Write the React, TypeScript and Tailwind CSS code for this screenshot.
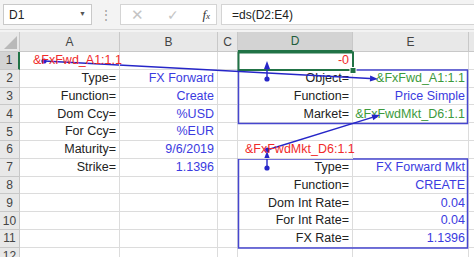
import React from 'react';

type Cell = { text: string; color?: string; align?: 'left' | 'right' };

const RED = 'text-[#f02a2a]';
const BLUE = 'text-[#3b3be0]';
const GREEN = 'text-[#3c9a3c]';
const BLACK = 'text-[#222]';

// columns: A, B, C, D, E, F
const rows: (Cell | null)[][] = [
  [{ text: '&FxFwd_A1:1.1', color: RED, align: 'left' }, null, null, { text: '-0', color: RED }, null, null],
  [{ text: 'Type=' }, { text: 'FX Forward', color: BLUE }, null, { text: 'Object=' }, { text: '&FxFwd_A1:1.1', color: GREEN }, null],
  [{ text: 'Function=' }, { text: 'Create', color: BLUE }, null, { text: 'Function=' }, { text: 'Price Simple', color: BLUE }, null],
  [{ text: 'Dom Ccy=' }, { text: '%USD', color: BLUE }, null, { text: 'Market=' }, { text: '&FxFwdMkt_D6:1.1', color: GREEN }, null],
  [{ text: 'For Ccy=' }, { text: '%EUR', color: BLUE }, null, null, null, null],
  [{ text: 'Maturity=' }, { text: '9/6/2019', color: BLUE }, null, { text: '&FxFwdMkt_D6:1.1', color: RED, align: 'left' }, null, null],
  [{ text: 'Strike=' }, { text: '1.1396', color: BLUE }, null, { text: 'Type=' }, { text: 'FX Forward Mkt', color: BLUE }, null],
  [null, null, null, { text: 'Function=' }, { text: 'CREATE', color: BLUE }, null],
  [null, null, null, { text: 'Dom Int Rate=' }, { text: '0.04', color: BLUE }, null],
  [null, null, null, { text: 'For Int Rate=' }, { text: '0.04', color: BLUE }, null],
  [null, null, null, { text: 'FX Rate=' }, { text: '1.1396', color: BLUE }, null],
  [null, null, null, null, null, null],
];

const cols = ['A', 'B', 'C', 'D', 'E', ''];

function Arrow({ x1, y1, x2, y2 }: { x1: number; y1: number; x2: number; y2: number }) {
  const dx = x2 - x1;
  const dy = y2 - y1;
  const len = Math.hypot(dx, dy);
  const ux = dx / len;
  const uy = dy / len;
  const bx = x2 - ux * 8;
  const by = y2 - uy * 8;
  const px = -uy * 3;
  const py = ux * 3;
  return (
    <g>
      <line x1={x1} y1={y1} x2={bx} y2={by} stroke="#2626c8" strokeWidth={1.4} />
      <circle cx={x1} cy={y1} r={2.6} fill="#2626c8" />
      <polygon points={`${x2},${y2} ${bx + px},${by + py} ${bx - px},${by - py}`} fill="#2626c8" />
    </g>
  );
}

function Overlay() {
  return (
    <svg className="absolute left-0 top-0 pointer-events-none" width={474} height={257}>
      {/* trace boxes */}
      <rect x={238.5} y={70} width={229} height={53.5} fill="none" stroke="#4646cf" strokeWidth={1.5} />
      <rect x={238.5} y={159} width={229} height={89} fill="none" stroke="#4646cf" strokeWidth={1.5} />
      {/* selection D1 */}
      <rect x={238.5} y={52.5} width={114.5} height={17.5} fill="none" stroke="#217346" strokeWidth={2} />
      <rect x={350} y={67.5} width={6} height={6} fill="#217346" stroke="#fff" strokeWidth={1} />
      <Arrow x1={44} y1={61} x2={378} y2={79} />
      <Arrow x1={267} y1={79} x2={267} y2={61} />
      <Arrow x1={267} y1={150} x2={380} y2={115} />
      <Arrow x1={267} y1={168} x2={267} y2={151} />
    </svg>
  );
}

function FormulaBar() {
  return (
    <div className="h-[30px] bg-[#f3f3f3] border-b border-[#dadada] flex items-center pl-[3px] gap-0">
      <div className="w-[89px] h-[21px] bg-white border border-[#c9c9c9] flex items-center justify-between pl-[5px] pr-[5px] text-[12px] text-[#222]">
        <span>D1</span>
        <span className="text-[7px] text-[#555]">▼</span>
      </div>
      <div className="w-[28px] flex justify-center text-[#9a9a9a] text-[12px] leading-none">⋮</div>
      <div className="w-[97px] h-[21px] bg-white border border-[#d4d4d4] flex items-center pl-[10px] pr-[6px] justify-between">
        <span className="text-[15px] text-[#c4c4c4] leading-none">✕</span>
        <span className="text-[14px] text-[#c4c4c4] leading-none">✓</span>
        <span className="text-[13px] text-[#333] italic font-['Liberation_Serif',serif] leading-none">
          f<span className="text-[9px]">x</span>
        </span>
      </div>
      <div className="flex-1 ml-[4px] h-[21px] bg-white border border-[#d4d4d4] border-r-0 flex items-center pl-[10px] text-[12px] text-[#222]">
        =ds(D2:E4)
      </div>
    </div>
  );
}

export default function App() {
  return (
    <div className="relative w-[474px] h-[257px] overflow-hidden bg-white font-['Liberation_Sans',Arial,sans-serif]">
      <FormulaBar />
      <div className="h-[2px] bg-[#f3f3f3]" />
      <div className="grid grid-cols-[20px_100px_98px_20px_115px_116px_1fr] grid-rows-[20px_repeat(12,17.8px)]">
        {/* header row */}
        <div className="bg-[#e8e8e8] border-r border-b border-[#c8c8c8] flex items-end justify-end p-[2px]">
          <div className="w-0 h-0 border-l-[13px] border-l-transparent border-b-[13px] border-b-[#b9b9b9]" />
        </div>
        {cols.map((c, i) => (
          <div
            key={i}
            className={
              c === 'D'
                ? 'bg-[#d3d3d3] border-r border-[#c8c8c8] border-b-2 border-b-[#217346] flex items-center justify-center text-[12px] text-[#1f5c3a]'
                : 'bg-[#e8e8e8] border-r border-b border-[#c8c8c8] flex items-center justify-center text-[12px] text-[#444]'
            }
          >
            {c}
          </div>
        ))}
        {rows.map((r, ri) => (
          <React.Fragment key={ri}>
            <div
              className={
                ri === 0
                  ? 'bg-[#d3d3d3] border-b border-[#c8c8c8] border-r-2 border-r-[#217346] flex items-center justify-center text-[12px] text-[#333]'
                  : 'bg-[#e8e8e8] border-r border-b border-[#c8c8c8] flex items-center justify-center text-[12px] text-[#444]'
              }
            >
              {ri + 1}
            </div>
            {r.map((cell, ci) => (
              <div
                key={ci}
                className={`relative border-r border-b border-[#dcdcdc] flex items-center px-[3px] text-[12.5px] leading-none whitespace-nowrap ${
                  cell && cell.align === 'left' ? 'justify-start overflow-visible z-10' : 'justify-end'
                } ${cell ? cell.color ?? BLACK : ''}`}
              >
                {cell ? (
                  cell.align === 'left' ? (
                    <span className={ci === 0 ? 'absolute left-[13px]' : 'absolute left-[7px]'}>{cell.text}</span>
                  ) : (
                    cell.text
                  )
                ) : null}
              </div>
            ))}
          </React.Fragment>
        ))}
      </div>
      <Overlay />
    </div>
  );
}
